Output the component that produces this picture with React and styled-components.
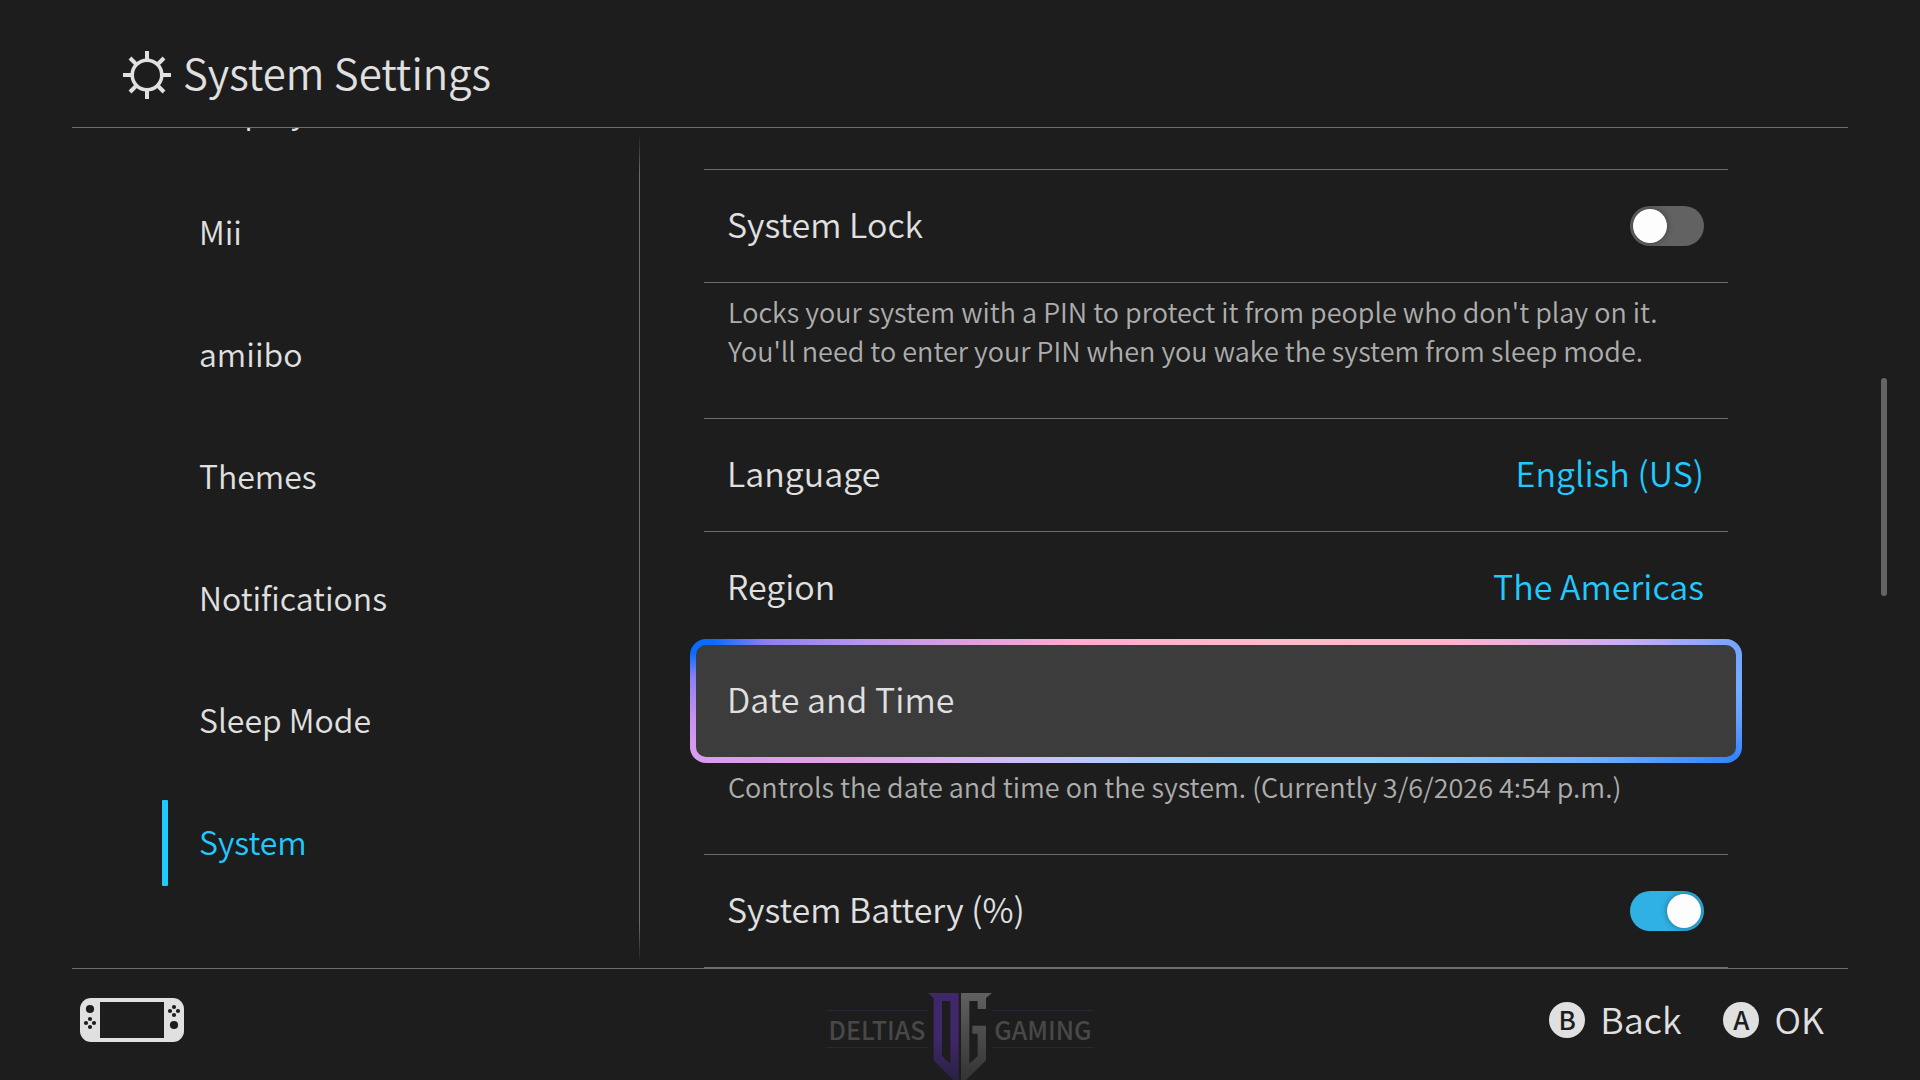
import React from "react";
import styled, { createGlobalStyle, css } from "styled-components";

const color = {
  bg: "#1d1d1d",
  text: "#e0e0e0",
  muted: "#adadad",
  rule: "#6c6c6c",
  accent: "#20caff",
  focusFill: "#3c3c3c",
};

const GlobalStyle = createGlobalStyle`
  *, *::before, *::after { box-sizing: border-box; }
  body {
    margin: 0;
    background: ${color.bg};
    color: ${color.text};
    font-family: "Noto Sans CJK JP", "Noto Sans", sans-serif;
    font-weight: 350;
  }
  button, input { font: inherit; color: inherit; }
`;

const Screen = styled.div`
  display: grid;
  grid-template-rows: 128px minmax(0, 1fr) 112px;
  height: 100vh;
  overflow: hidden;
`;

const Header = styled.header`
  display: flex;
  align-items: center;
  gap: 12px;
  margin: 0 72px;
  padding: 22px 51px 0;
  border-bottom: 1px solid ${color.rule};
`;

const Title = styled.h1`
  margin: 0;
  padding-bottom: 6px;
  font-size: 42px;
  line-height: 60px;
  font-weight: inherit;
`;

const Body = styled.div`
  display: grid;
  grid-template-columns: 567px 1px minmax(0, 1fr) 6px;
  padding: 0 33px 0 72px;
`;

const Nav = styled.nav`
  display: flex;
  flex-direction: column;
  justify-content: flex-end;
  padding: 0 0 64px 90px;
  overflow: hidden;
`;

const NavItem = styled.a`
  display: flex;
  flex: none;
  align-items: center;
  gap: 31px;
  height: 122px;
  font-size: 32px;
  line-height: 48px;
  text-decoration: none;
  color: ${(p) => (p.$active ? color.accent : color.text)};

  &::before {
    content: "";
    width: 6px;
    height: 86px;
    border-radius: 1px;
    background: ${(p) => (p.$active ? color.accent : "transparent")};
  }
`;

/* The font sits low in its line box, so labels carry a little space below. */
const Label = styled.span`
  padding-bottom: 4px;
  color: ${(p) => (p.$value ? color.accent : "inherit")};
`;

const Divider = styled.div`
  margin: 6px 0;
  background: linear-gradient(transparent, ${color.rule} 40px, ${color.rule} calc(100% - 40px), transparent);
`;

const Settings = styled.main`
  padding: 41px 153px 0 64px;
  overflow: hidden;
`;

const rowStyle = css`
  display: flex;
  align-items: center;
  justify-content: space-between;
  width: 100%;
  height: 113px;
  margin: 0;
  padding: 0 24px 0 23px;
  border: 0;
  border-top: 1px solid ${color.rule};
  background: none;
  font-size: 34px;
  line-height: 50px;
  text-align: left;
`;

const ToggleRow = styled.label`
  ${rowStyle}
  ${(p) => p.$last && css`
    height: 114px;
    border-bottom: 1px solid ${color.rule};
  `}
`;

const ButtonRow = styled.button`
  ${rowStyle}
  ${(p) => p.$focused && css`
    position: relative;
    z-index: 1;

    &::before {
      content: "";
      position: absolute;
      z-index: -1;
      inset: -6px -14px;
      border: 6px solid transparent;
      border-radius: 16px;
      background:
        linear-gradient(${color.focusFill}, ${color.focusFill}) padding-box,
        linear-gradient(#0a6cff 14px, #8d80f3 38px, #c793f0 80px, #d69cf0 110px) left / 6px 100% no-repeat border-box,
        linear-gradient(#74a2ff, #72aeff 50px, #66a0ff 80px, #2f82ff) right / 6px 100% no-repeat border-box,
        linear-gradient(90deg, #0a6cff 24px, #8c7ef2 75px, #b695ec 170px, #dc9fdf 270px, #ffacd0 390px, #fdbcc8 600px, #ffb4cc 760px, #e6b0e2 850px, #c8adf3 940px, #74a2ff) top / 100% 50% no-repeat border-box,
        linear-gradient(90deg, #d69cf0, #e3a4e4 160px, #d8b8f4 280px, #bfc8fd 390px, #90d3ff 560px, #90d3ff 680px, #86c2fc 800px, #6fb0ff 900px, #2f82ff) bottom / 100% 50% no-repeat border-box;
    }
  `}
`;

const Description = styled.p`
  margin: 0;
  padding: 9px 24px 48px;
  border-top: 1px solid ${color.rule};
  color: ${color.muted};
  font-size: 27px;
  line-height: 39px;
`;

const Switch = styled.input`
  appearance: none;
  display: flex;
  justify-content: flex-start;
  width: 74px;
  height: 40px;
  margin: 0;
  padding: 3px;
  border-radius: 20px;
  background: #626262;

  &::before {
    content: "";
    width: 34px;
    height: 34px;
    border-radius: 50%;
    background: #fdfdfd;
    box-shadow: 0 0 6px rgba(0, 0, 0, 0.4);
  }

  &:checked {
    justify-content: flex-end;
    background: #2fb1e3;
  }
`;

const ScrollThumb = styled.div`
  height: 218px;
  margin-top: 250px;
  border-radius: 3px;
  background: #646464;
`;

const Footer = styled.footer`
  display: grid;
  grid-template-columns: 1fr auto 1fr;
  margin: 0 72px;
  border-top: 1px solid ${color.rule};
`;

const FooterSide = styled.div`
  display: flex;
  align-items: center;
  justify-content: ${(p) => (p.$end ? "flex-end" : "flex-start")};
  gap: 42px;
  padding: 0 ${(p) => (p.$end ? 24 : 8)}px 10px;
`;

const Action = styled.button`
  display: flex;
  align-items: center;
  gap: 15px;
  padding: 0;
  border: 0;
  background: none;
  font-size: 36px;
  line-height: 50px;
`;

const Key = styled.span`
  display: block;
  width: 36px;
  height: 36px;
  border-radius: 50%;
  background: ${color.text};
  color: ${color.bg};
  font-size: 26px;
  line-height: 34px;
  font-weight: 500;
  text-align: center;
`;

const Brand = styled.div`
  display: flex;
  align-items: flex-start;
  align-self: end;
`;

const BrandWord = styled.span`
  width: 102px;
  margin-top: 17px;
  border: 1px solid #2c2340;
  border-width: 1px 0;
  color: #484848;
  font-weight: 500;
  font-size: 25px;
  line-height: 36px;
  text-align: center;
`;

function SunIcon() {
  return (
    <svg width="48" height="48" viewBox="0 0 48 48" fill="none" stroke={color.text} aria-hidden="true">
      <circle cx="24" cy="24" r="14.8" strokeWidth="3.6" />
      <path strokeWidth="4" d="M24 0v9M24 39v9M0 24h9M39 24h9M7 7l6.5 6.5M34.5 34.5L41 41M41 7l-6.5 6.5M13.5 34.5L7 41" />
    </svg>
  );
}

function ConsoleIcon() {
  const cluster = (x, y) =>
    [[0, -4], [-4, 0], [4, 0], [0, 4]].map(([dx, dy]) => (
      <circle key={`${dx},${dy}`} cx={x + dx} cy={y + dy} r="2.1" />
    ));
  return (
    <svg width="104" height="44" viewBox="0 0 104 44" role="img" aria-label="Console">
      <rect width="104" height="44" rx="11" fill={color.text} />
      <g fill={color.bg}>
        <rect x="20" y="4" width="64" height="36" />
        <circle cx="10" cy="11" r="4.1" />
        {cluster(10, 25)}
        {cluster(94, 13)}
        <circle cx="94" cy="27" r="4.1" />
      </g>
    </svg>
  );
}

function BrandEmblem() {
  return (
    <svg width="64" height="87" viewBox="327 12 192 261" aria-hidden="true">
      <defs>
        <linearGradient id="emblem-left" x1="0" y1="0" x2="0" y2="1">
          <stop offset="0.5" stopColor="#40276a" />
          <stop offset="1" stopColor="#2a2144" />
        </linearGradient>
        <linearGradient id="emblem-right" x1="0" y1="0" x2="0" y2="1">
          <stop offset="0" stopColor="#606060" />
          <stop offset="1" stopColor="#343434" />
        </linearGradient>
      </defs>
      <path fill="url(#emblem-left)" fillRule="evenodd" d="M327 12H419V273H402L344 214V27ZM369 36V201L394 224V36Z" />
      <path fill="url(#emblem-right)" d="M426 12H519L501 27V60H476V36H451V224L476 201V134H460V110H501V214L441 273H426Z" />
    </svg>
  );
}

const sections = ["Display", "Mii", "amiibo", "Themes", "Notifications", "Sleep Mode", "System"];

export default function App() {
  return (
    <Screen>
      <GlobalStyle />
      <Header>
        <SunIcon />
        <Title>System Settings</Title>
      </Header>
      <Body>
        <Nav aria-label="Settings sections">
          {sections.map((name) => (
            <NavItem key={name} href="#" $active={name === "System"}>
              <Label>{name}</Label>
            </NavItem>
          ))}
        </Nav>
        <Divider />
        <Settings>
          <ToggleRow>
            <Label>System Lock</Label>
            <Switch type="checkbox" role="switch" />
          </ToggleRow>
          <Description>
            Locks your system with a PIN to protect it from people who don't play on it.
            <br />
            You'll need to enter your PIN when you wake the system from sleep mode.
          </Description>
          <ButtonRow>
            <Label>Language</Label>
            <Label $value>English (US)</Label>
          </ButtonRow>
          <ButtonRow>
            <Label>Region</Label>
            <Label $value>The Americas</Label>
          </ButtonRow>
          <ButtonRow $focused>
            <Label>Date and Time</Label>
          </ButtonRow>
          <Description>Controls the date and time on the system. (Currently 3/6/2026 4:54 p.m.)</Description>
          <ToggleRow $last>
            <Label>System Battery (%)</Label>
            <Switch type="checkbox" role="switch" defaultChecked />
          </ToggleRow>
        </Settings>
        <ScrollThumb />
      </Body>
      <Footer>
        <FooterSide>
          <ConsoleIcon />
        </FooterSide>
        <Brand>
          <BrandWord>DELTIAS</BrandWord>
          <BrandEmblem />
          <BrandWord>GAMING</BrandWord>
        </Brand>
        <FooterSide $end>
          <Action>
            <Key>B</Key>
            <Label>Back</Label>
          </Action>
          <Action>
            <Key>A</Key>
            <Label>OK</Label>
          </Action>
        </FooterSide>
      </Footer>
    </Screen>
  );
}
